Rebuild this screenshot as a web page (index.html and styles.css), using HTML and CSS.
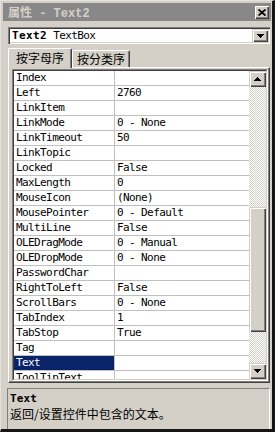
FILE: index.html
```html
<!DOCTYPE html>
<html lang="zh-CN">
<head>
    <meta charset="UTF-8">
    <title>属性 - Text2</title>
    <link rel="stylesheet" href="styles.css">
</head>
<body>
    <div class="window">
        <div class="titlebar">
            <span class="title"><span class="cjk">属性</span> - Text2</span>
            <span class="close-btn">
                <svg width="8" height="7" viewBox="0 0 8 7"><path d="M0.5 0.5L7.5 6.5M7.5 0.5L0.5 6.5" stroke="#000" stroke-width="1.8"/></svg>
            </span>
        </div>

        <div class="combo">
            <span class="combo-text"><b>Text2</b> TextBox</span>
            <span class="btn3d drop-btn">
                <svg width="7" height="4" viewBox="0 0 7 4"><path d="M0 0h7v1H6v1H5v1H4v1H3V3H2V2H1V1H0z"/></svg>
            </span>
        </div>

        <div class="tabs">
            <div class="tab active">按字母序</div>
            <div class="tab">按分类序</div>
        </div>

        <div class="tab-page">
            <div class="grid">
                <div class="grid-inner">
                    <div class="rows">
                        <div class="row"><span class="name">Index</span><span class="value"></span></div>
                        <div class="row"><span class="name">Left</span><span class="value">2760</span></div>
                        <div class="row"><span class="name">LinkItem</span><span class="value"></span></div>
                        <div class="row"><span class="name">LinkMode</span><span class="value">0 - None</span></div>
                        <div class="row"><span class="name">LinkTimeout</span><span class="value">50</span></div>
                        <div class="row"><span class="name">LinkTopic</span><span class="value"></span></div>
                        <div class="row"><span class="name">Locked</span><span class="value">False</span></div>
                        <div class="row"><span class="name">MaxLength</span><span class="value">0</span></div>
                        <div class="row"><span class="name">MouseIcon</span><span class="value">(None)</span></div>
                        <div class="row"><span class="name">MousePointer</span><span class="value">0 - Default</span></div>
                        <div class="row"><span class="name">MultiLine</span><span class="value">False</span></div>
                        <div class="row"><span class="name">OLEDragMode</span><span class="value">0 - Manual</span></div>
                        <div class="row"><span class="name">OLEDropMode</span><span class="value">0 - None</span></div>
                        <div class="row"><span class="name">PasswordChar</span><span class="value"></span></div>
                        <div class="row"><span class="name">RightToLeft</span><span class="value">False</span></div>
                        <div class="row"><span class="name">ScrollBars</span><span class="value">0 - None</span></div>
                        <div class="row"><span class="name">TabIndex</span><span class="value">1</span></div>
                        <div class="row"><span class="name">TabStop</span><span class="value">True</span></div>
                        <div class="row"><span class="name">Tag</span><span class="value"></span></div>
                        <div class="row selected"><span class="name">Text</span><span class="value"></span></div>
                        <div class="row"><span class="name">ToolTipText</span><span class="value"></span></div>
                    </div>
                    <div class="scrollbar">
                        <span class="btn3d sb-btn">
                            <svg width="7" height="4" viewBox="0 0 7 4"><path d="M3 0h1v1h1v1h1v1h1v1H0V3h1V2h1V1h1z"/></svg>
                        </span>
                        <span class="track track-top"></span>
                        <span class="btn3d thumb"></span>
                        <span class="track track-bottom"></span>
                        <span class="btn3d sb-btn">
                            <svg width="7" height="4" viewBox="0 0 7 4"><path d="M0 0h7v1H6v1H5v1H4v1H3V3H2V2H1V1H0z"/></svg>
                        </span>
                    </div>
                </div>
            </div>
        </div>

        <div class="desc">
            <div class="desc-name">Text</div>
            <div class="desc-text">返回/设置控件中包含的文本。</div>
        </div>
    </div>
</body>
</html>
```

FILE: styles.css
```css
body {
    margin: 0;
    background: #d4d0c8;
}

.window {
    width: 275px;
    height: 432px;
    box-sizing: border-box;
    background: #d4d0c8;
    border-top: 1px solid #e4e2dc;
    border-left: 1px solid #e4e2dc;
    border-right: 3px solid #161616;
    border-bottom: 3px solid #161616;
    padding: 2px 1px 0 2px;
    display: flex;
    flex-direction: column;
    font-family: "DejaVu Sans Mono", monospace;
    font-size: 11px;
    letter-spacing: -0.6px;
    color: #000;
}

/* barre de titre */
.titlebar {
    height: 18px;
    flex: none;
    background: #888888;
    display: flex;
    align-items: center;
    justify-content: space-between;
    padding: 0 2px 0 5px;
}

.title {
    color: #d4d0c8;
    font-weight: bold;
    font-size: 12px;
    letter-spacing: 0;
    font-family: "Liberation Mono", "Noto Sans CJK SC", monospace;
}

.cjk {
    font-family: "Noto Sans CJK SC", sans-serif;
}

.btn3d {
    background: #d4d0c8;
    box-shadow: inset 1px 1px #d4d0c8, inset 2px 2px #fff, inset -1px -1px #404040, inset -2px -2px #808080;
    display: flex;
    align-items: center;
    justify-content: center;
}

.close-btn {
    width: 14px;
    height: 13px;
    background: #d4d0c8;
    box-shadow: inset 1px 1px #fff, inset -1px -1px #404040, inset -2px -2px #808080;
    display: flex;
    align-items: center;
    justify-content: center;
}

/* combo */
.combo {
    flex: none;
    margin: 6px 1px 0 5px;
    height: 17px;
    box-sizing: border-box;
    background: #fff;
    box-shadow: inset 1px 1px #808080, inset 2px 2px #404040, inset -1px -1px #fff, inset -2px -2px #d4d0c8;
    display: flex;
    align-items: center;
    justify-content: space-between;
    padding: 2px 2px 2px 4px;
}

.combo-text b {
    letter-spacing: 0.4px;
}

.drop-btn {
    width: 16px;
    height: 13px;
}

/* onglets */
.tabs {
    flex: none;
    display: flex;
    align-items: flex-end;
    height: 19px;
    margin: 4px 0 0 5px;
}

.tab {
    height: 17px;
    box-sizing: border-box;
    border-top: 1px solid #fff;
    border-left: 1px solid #fff;
    border-right: 1px solid #404040;
    box-shadow: inset -1px 0 #808080;
    border-radius: 2px 2px 0 0;
    padding: 0 4px;
    font-family: "Noto Sans CJK SC", sans-serif;
    font-size: 12px;
    letter-spacing: 0;
    line-height: 15px;
}

.tab.active {
    height: 20px;
    padding: 1px 7px 0;
    margin-bottom: -1px;
    position: relative;
    z-index: 1;
    background: #d4d0c8;
}

.tab-page {
    flex: none;
    margin: 0 1px 0 5px;
    border-top: 1px solid #fff;
    border-left: 1px solid #fff;
    border-right: 1px solid #404040;
    border-bottom: 1px solid #404040;
    box-shadow: inset -1px -1px #808080;
    padding: 1px 1px 1px 3px;
}

/* grille des propriétés */
.grid {
    border: 1px solid;
    border-color: #808080 #fff #fff #808080;
}

.grid-inner {
    border: 1px solid;
    border-color: #404040 #d4d0c8 #d4d0c8 #404040;
    height: 308px;
    background: #fff;
    display: flex;
}

.rows {
    flex: 1;
    overflow: hidden;
}

.row {
    display: flex;
    height: 15px;
    box-sizing: border-box;
    border-bottom: 1px solid #c0c0c0;
    line-height: 14px;
    white-space: nowrap;
}

.name {
    width: 101px;
    flex: none;
    box-sizing: border-box;
    border-right: 1px solid #c0c0c0;
    padding-left: 2px;
}

.value {
    flex: 1;
    padding-left: 2px;
}

.row.selected .name {
    background: #0a246a;
    color: #fff;
}

.scrollbar {
    width: 17px;
    flex: none;
    display: flex;
    flex-direction: column;
}

.sb-btn {
    height: 16px;
    flex: none;
}

.track {
    background: repeating-conic-gradient(#fff 0 25%, #d4d0c8 0 50%) 0 0 / 2px 2px;
}

.track-top {
    height: 120px;
}

.thumb {
    height: 125px;
    flex: none;
}

.track-bottom {
    flex: 1;
}

/* description */
.desc {
    flex: 1;
    margin: 5px 1px 0 4px;
    border-top: 1px solid #808080;
    border-left: 1px solid #808080;
    border-right: 1px solid #fff;
    padding: 3px 2px 0;
}

.desc-name {
    font-weight: bold;
    letter-spacing: 0.1px;
    line-height: 14px;
}

.desc-text {
    font-family: "Noto Sans CJK SC", sans-serif;
    font-size: 12px;
    letter-spacing: 0;
    line-height: 15px;
}
```
